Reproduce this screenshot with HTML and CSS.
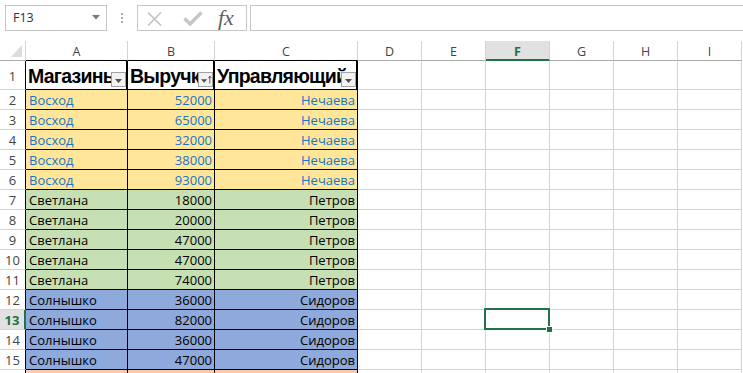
FILE: index.html
```html
<!DOCTYPE html>
<html lang="ru">
<head>
<meta charset="utf-8">
<title>Книга1 - Excel</title>
<link rel="stylesheet" href="styles.css">
</head>
<body>
<div class="toolbar">
  <div class="namebox"><span>F13</span><svg width="8" height="5" viewBox="0 0 8 5"><path d="M0 0H8L4 4.5Z" fill="#7a7a7a"/></svg></div>
  <div class="grip"><i></i><i></i><i></i></div>
  <div class="fxbox">
    <svg class="ic-x" width="15" height="14" viewBox="0 0 15 14"><path d="M1 0.5L14 13.5M14 0.5L1 13.5" stroke="#c4c4c4" stroke-width="1.7" fill="none"/></svg>
    <svg class="ic-ok" width="20" height="15" viewBox="0 0 20 15"><path d="M1.5 7.5L7 13L18.5 1.5" stroke="#c4c4c4" stroke-width="3.2" fill="none"/></svg>
    <span class="fx">fx</span>
  </div>
  <div class="formula"></div>
</div>

<div class="sheet">
  <!-- column headers -->
  <div class="corner"><svg width="11" height="12" viewBox="0 0 11 12"><path d="M11 0V12H0Z" fill="#dcdcdc"/></svg></div>
  <div class="ch tb">A</div><div class="ch tb">B</div><div class="ch tb">C</div><div class="ch">D</div><div class="ch">E</div><div class="ch act">F</div><div class="ch">G</div><div class="ch">H</div><div class="ch">I</div>

  <!-- row 1 -->
  <div class="rh tk">1</div>
  <div class="c t hd">Магазины<span class="flt"><svg width="7" height="4" viewBox="0 0 7 4"><path d="M0 0H7L3.5 4Z" fill="#505050"/></svg></span></div>
  <div class="c t hd">Выручка<span class="flt sort"><svg width="7" height="4" viewBox="0 0 7 4"><path d="M0 0H7L3.5 4Z" fill="#505050"/></svg><svg width="4" height="9" viewBox="0 0 4 9"><path d="M2 9V1M0.3 3L2 0.8L3.7 3" stroke="#505050" stroke-width="1" fill="none"/></svg></span></div>
  <div class="c t hd">Управляющий<span class="flt"><svg width="7" height="4" viewBox="0 0 7 4"><path d="M0 0H7L3.5 4Z" fill="#505050"/></svg></span></div>
  <div class="c"></div><div class="c"></div><div class="c"></div><div class="c"></div><div class="c"></div><div class="c"></div>

  <div class="rh tk">2</div><div class="c t y bl">Восход</div><div class="c t y bl r">52000</div><div class="c t y bl r">Нечаева</div>
  <div class="c"></div><div class="c"></div><div class="c"></div><div class="c"></div><div class="c"></div><div class="c"></div>
  <div class="rh tk">3</div><div class="c t y bl">Восход</div><div class="c t y bl r">65000</div><div class="c t y bl r">Нечаева</div>
  <div class="c"></div><div class="c"></div><div class="c"></div><div class="c"></div><div class="c"></div><div class="c"></div>
  <div class="rh tk">4</div><div class="c t y bl">Восход</div><div class="c t y bl r">32000</div><div class="c t y bl r">Нечаева</div>
  <div class="c"></div><div class="c"></div><div class="c"></div><div class="c"></div><div class="c"></div><div class="c"></div>
  <div class="rh tk">5</div><div class="c t y bl">Восход</div><div class="c t y bl r">38000</div><div class="c t y bl r">Нечаева</div>
  <div class="c"></div><div class="c"></div><div class="c"></div><div class="c"></div><div class="c"></div><div class="c"></div>
  <div class="rh tk">6</div><div class="c t y bl">Восход</div><div class="c t y bl r">93000</div><div class="c t y bl r">Нечаева</div>
  <div class="c"></div><div class="c"></div><div class="c"></div><div class="c"></div><div class="c"></div><div class="c"></div>

  <div class="rh tk">7</div><div class="c t g">Светлана</div><div class="c t g r">18000</div><div class="c t g r">Петров</div>
  <div class="c"></div><div class="c"></div><div class="c"></div><div class="c"></div><div class="c"></div><div class="c"></div>
  <div class="rh tk">8</div><div class="c t g">Светлана</div><div class="c t g r">20000</div><div class="c t g r">Петров</div>
  <div class="c"></div><div class="c"></div><div class="c"></div><div class="c"></div><div class="c"></div><div class="c"></div>
  <div class="rh tk">9</div><div class="c t g">Светлана</div><div class="c t g r">47000</div><div class="c t g r">Петров</div>
  <div class="c"></div><div class="c"></div><div class="c"></div><div class="c"></div><div class="c"></div><div class="c"></div>
  <div class="rh tk">10</div><div class="c t g">Светлана</div><div class="c t g r">47000</div><div class="c t g r">Петров</div>
  <div class="c"></div><div class="c"></div><div class="c"></div><div class="c"></div><div class="c"></div><div class="c"></div>
  <div class="rh tk">11</div><div class="c t g">Светлана</div><div class="c t g r">74000</div><div class="c t g r">Петров</div>
  <div class="c"></div><div class="c"></div><div class="c"></div><div class="c"></div><div class="c"></div><div class="c"></div>

  <div class="rh tk">12</div><div class="c t b">Солнышко</div><div class="c t b r">36000</div><div class="c t b r">Сидоров</div>
  <div class="c"></div><div class="c"></div><div class="c"></div><div class="c"></div><div class="c"></div><div class="c"></div>
  <div class="rh tk act">13</div><div class="c t b">Солнышко</div><div class="c t b r">82000</div><div class="c t b r">Сидоров</div>
  <div class="c"></div><div class="c"></div><div class="c sel-host"><span class="sel"><span class="handle"></span></span></div><div class="c"></div><div class="c"></div><div class="c"></div>
  <div class="rh tk">14</div><div class="c t b">Солнышко</div><div class="c t b r">36000</div><div class="c t b r">Сидоров</div>
  <div class="c"></div><div class="c"></div><div class="c"></div><div class="c"></div><div class="c"></div><div class="c"></div>
  <div class="rh tk">15</div><div class="c t b">Солнышко</div><div class="c t b r">47000</div><div class="c t b r">Сидоров</div>
  <div class="c"></div><div class="c"></div><div class="c"></div><div class="c"></div><div class="c"></div><div class="c"></div>

  <div class="rh tk"></div><div class="c t o"></div><div class="c t o r"></div><div class="c t o r"></div>
  <div class="c"></div><div class="c"></div><div class="c"></div><div class="c"></div><div class="c"></div><div class="c"></div>
</div>
</body>
</html>
```

FILE: styles.css
```css
* { box-sizing: border-box; }
html, body { margin: 0; padding: 0; background: #fff; }
body {
  width: 743px;
  height: 373px;
  overflow: hidden;
  font-family: "Open Sans", "Noto Sans", sans-serif;
  color: #000;
}

/* ---------- formula bar ---------- */
.toolbar {
  height: 41px;
  display: flex;
  align-items: flex-start;
  padding: 5px 0 0 5px;
}
.namebox {
  width: 102px;
  height: 26px;
  border: 1px solid #c6c6c6;
  display: flex;
  align-items: center;
  justify-content: space-between;
  padding: 0 6px 1px 7px;
  font-size: 12.5px;
  color: #333;
}
.grip {
  width: 30px;
  height: 26px;
  display: flex;
  flex-direction: column;
  align-items: center;
  justify-content: center;
  gap: 2px;
}
.grip i { display: block; width: 2px; height: 2px; background: #a9a9a9; }
.fxbox {
  width: 110px;
  height: 26px;
  border: 1px solid #c6c6c6;
  display: flex;
  align-items: center;
  padding: 0 0 0 9px;
}
.ic-x { margin-top: 1px; }
.ic-ok { margin-left: 21px; margin-top: 1px; }
.fx {
  margin-left: 15px;
  font-family: "Liberation Serif", serif;
  font-style: italic;
  font-size: 22px;
  line-height: 22px;
  color: #5f5f5f;
}
.formula {
  flex: 1;
  height: 26px;
  margin-left: 3px;
  border: 1px solid #c6c6c6;
  border-right: 0;
}

/* ---------- sheet ---------- */
.sheet {
  display: grid;
  grid-template-columns: 26px 102px 87px 143px repeat(6, 64px);
  grid-template-rows: 20px 29px repeat(15, 20px);
  font-size: 13px;
}
.corner {
  border-right: 1px solid #d4d4d4;
  border-bottom: 1px solid #ababab;
  display: flex;
  justify-content: flex-end;
  align-items: flex-end;
  padding: 0 3px 3px 0;
}
.ch {
  border-right: 1px solid #d4d4d4;
  border-bottom: 1px solid #ababab;
  display: flex;
  align-items: center;
  justify-content: center;
  font-size: 12.5px;
  color: #444;
  padding-top: 1px;
}
.ch.tb { border-bottom-color: #000; }
.ch.act {
  background: #e1e1e1;
  color: #217346;
  font-weight: 700;
  border-bottom: 2px solid #217346;
  padding-top: 2px;
}
.rh {
  border-right: 1px solid #ababab;
  border-bottom: 1px solid #d4d4d4;
  display: flex;
  align-items: center;
  justify-content: center;
  font-size: 13px;
  color: #444;
  padding-top: 1px;
}
.rh.tk { border-right-color: #000; }
.rh.act {
  background: #e1e1e1;
  color: #217346;
  font-weight: 700;
  border-right: 2px solid #217346;
}
.c {
  border-right: 1px solid #d4d4d4;
  border-bottom: 1px solid #d4d4d4;
  display: flex;
  align-items: flex-end;
  padding: 0 3px 1px 3px;
  line-height: 16px;
  white-space: nowrap;
  overflow: hidden;
  position: relative;
}
.c.t { border-right-color: #000; border-bottom-color: #000; }
.c.r { justify-content: flex-end; padding-right: 2px; }
.c.hd {
  font-family: "Liberation Sans", "Noto Sans", sans-serif;
  font-weight: 700;
  font-size: 19.5px;
  line-height: 22px;
  letter-spacing: -0.75px;
  border-right-width: 2px;
  padding-left: 2px;
  padding-bottom: 2px;
}
.y { background: #ffe699; }
.g { background: #c6e0b4; }
.b { background: #8ea9db; }
.o { background: #f8cbad; }
.bl { color: #1a74c6; }

.flt {
  position: absolute;
  right: 0;
  bottom: 2px;
  width: 15px;
  height: 15px;
  border: 1px solid #a3a3a3;
  background: #f2f2f2;
  display: flex;
  align-items: flex-end;
  justify-content: center;
  padding-bottom: 3px;
}
.flt.sort { justify-content: flex-start; align-items: flex-end; padding-left: 2px; gap: 1px; padding-bottom: 2px; }
.flt.sort svg:first-child { margin-bottom: 1px; }

.sel-host { overflow: visible; }
.sel {
  position: absolute;
  left: -2px;
  top: -2px;
  right: -1px;
  bottom: -1px;
  border: 2px solid #217346;
  z-index: 2;
}
.handle {
  position: absolute;
  right: -5px;
  bottom: -5px;
  width: 7px;
  height: 7px;
  background: #217346;
  border: 1px solid #fff;
}
```
